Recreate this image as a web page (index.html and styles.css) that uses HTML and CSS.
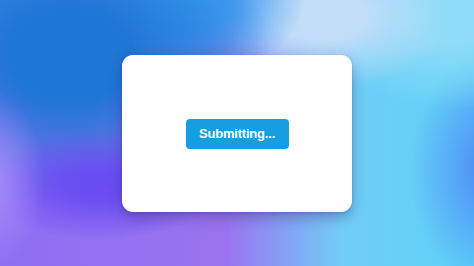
FILE: index.html
```html
<!DOCTYPE html>
<html lang="en">
<head>
<meta charset="utf-8">
<link rel="stylesheet" href="styles.css">
</head>
<body>
<main class="stage">
  <section class="card">
    <button class="submit" type="button">Submitting...</button>
  </section>
</main>
</body>
</html>
```
FILE: styles.css
```css
html, body {
  margin: 0;
  padding: 0;
  width: 100%;
  height: 100%;
}
body {
  font-family: "Liberation Sans", Arial, sans-serif;
}
.stage {
  width: 474px;
  height: 266px;
  display: flex;
  align-items: center;
  justify-content: center;
  overflow: hidden;
  background:
    radial-gradient(ellipse 55px 90px at -10px 180px, rgba(170,146,252,0.9) 0%, rgba(170,146,252,0.6) 35%, rgba(170,146,252,0) 100%),
    radial-gradient(ellipse 120px 55px at 100px 185px, rgba(104,76,242,1) 0%, rgba(104,76,242,0.9) 30%, rgba(104,76,242,0) 100%),
    radial-gradient(ellipse 200px 150px at 70px 55px, rgba(30,118,214,1) 0%, rgba(30,118,214,1) 30%, rgba(30,118,214,0) 100%),
    radial-gradient(ellipse 90px 60px at 10px 0px, rgba(52,148,235,0.8) 0%, rgba(52,148,235,0) 100%),
    radial-gradient(ellipse 120px 80px at 185px 0px, rgba(58,160,242,1) 0%, rgba(58,160,242,0.9) 40%, rgba(58,160,242,0) 100%),
    radial-gradient(ellipse 130px 75px at 320px 15px, rgba(196,222,249,1) 0%, rgba(196,222,249,0.95) 35%, rgba(196,222,249,0) 100%),
    radial-gradient(ellipse 130px 100px at 450px 10px, rgba(142,220,247,1) 0%, rgba(142,220,247,1) 35%, rgba(142,220,247,0) 100%),
    radial-gradient(ellipse 80px 120px at 490px 170px, rgba(78,128,247,0.95) 0%, rgba(78,128,247,0.5) 45%, rgba(78,128,247,0) 100%),
    linear-gradient(90deg, #8e6ef2 0%, #9a74f0 48%, #72cdf7 72%, #5cd2f7 100%);
}
.card {
  width: 230px;
  height: 157px;
  background: #ffffff;
  border-radius: 11px;
  box-shadow: 0 6px 14px rgba(50, 40, 110, 0.35), 0 1px 3px rgba(40, 40, 90, 0.2);
  display: flex;
  align-items: center;
  justify-content: center;
}
.submit {
  width: 103px;
  height: 30px;
  border: none;
  border-radius: 4px;
  background: #169fe0;
  color: #ffffff;
  font-family: "Liberation Sans", Arial, sans-serif;
  font-weight: 700;
  font-size: 13px;
  letter-spacing: -0.2px;
  padding: 0;
  margin-top: 1px;
  cursor: default;
}
```
